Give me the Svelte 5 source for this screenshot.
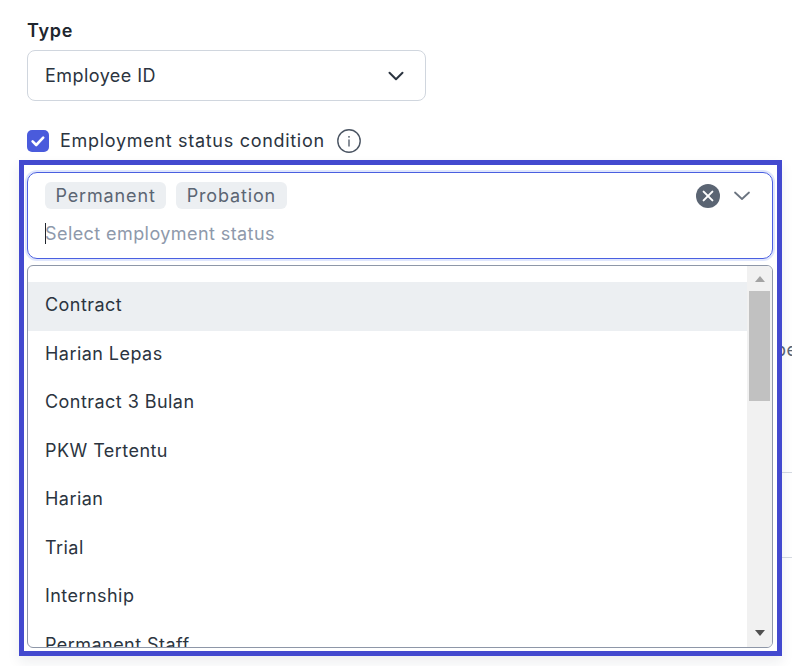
<script>
  const options = [
    "Contract",
    "Harian Lepas",
    "Contract 3 Bulan",
    "PKW Tertentu",
    "Harian",
    "Trial",
    "Internship",
    "Permanent Staff"
  ];
  const selected = ["Permanent", "Probation"];
</script>

<div class="page">
  <!-- content of the form behind the dropdown -->
  <span class="behind-text">pe</span>
  <i class="behind-line one"></i>
  <i class="behind-line two"></i>

  <div class="field">
    <label for="type">Type</label>
    <div class="select" id="type">
      <span>Employee ID</span>
      <svg width="18" height="18" viewBox="0 0 18 18" fill="none">
        <path d="M2.5 5.8 9 12.2l6.5-6.4" stroke="#2b3440" stroke-width="2" stroke-linecap="round" stroke-linejoin="round" />
      </svg>
    </div>
  </div>

  <div class="check-row">
    <span class="checkbox">
      <svg width="16" height="16" viewBox="0 0 16 16" fill="none">
        <path d="M2.6 8.4 6.2 12l7-7.4" stroke="#fff" stroke-width="2.6" stroke-linecap="round" stroke-linejoin="round" />
      </svg>
    </span>
    <span class="check-label">Employment status condition</span>
    <svg class="info" width="26" height="26" viewBox="0 0 26 26" fill="none">
      <circle cx="13" cy="13" r="11.2" stroke="#4b5563" stroke-width="1.4" />
      <path d="M13 12v6" stroke="#4b5563" stroke-width="1.3" stroke-linecap="round" />
      <circle cx="13" cy="8.8" r="0.9" fill="#4b5563" />
    </svg>
  </div>

  <div class="highlight">
    <div class="multi">
      <div class="multi-main">
        <div class="tags">
          {#each selected as tag}
            <span class="tag">{tag}</span>
          {/each}
        </div>
        <div class="placeholder"><i class="caret"></i>Select employment status</div>
      </div>
      <div class="multi-icons">
        <svg width="24" height="24" viewBox="0 0 24 24" fill="none">
          <circle cx="12" cy="12" r="12" fill="#5b6573" />
          <path d="M7.6 7.6l8.8 8.8M16.4 7.6l-8.8 8.8" stroke="#fff" stroke-width="2" stroke-linecap="round" />
        </svg>
        <svg width="18" height="18" viewBox="0 0 18 18" fill="none">
          <path d="M2 5.5 9 12l7-6.5" stroke="#6b7480" stroke-width="1.8" stroke-linecap="round" stroke-linejoin="round" />
        </svg>
      </div>
    </div>

    <div class="dropdown">
      <ul>
        {#each options as option, i}
          <li class:active={i === 0}>{option}</li>
        {/each}
      </ul>
      <div class="scrollbar">
        <span class="arrow up"></span>
        <div class="track"><div class="thumb"></div></div>
        <span class="arrow down"></span>
      </div>
    </div>
  </div>
</div>

<style>
  :global(body) {
    background: #fff;
  }

  .page {
    position: relative;
    width: 792px;
    height: 666px;
    overflow: hidden;
    padding: 20px 0 0 27px;
    box-sizing: border-box;
    font-family: Inter, "Liberation Sans", sans-serif;
    color: #2b3440;
  }

  .behind-text {
    position: absolute;
    left: 775px;
    top: 339px;
    font-size: 18px;
    letter-spacing: 0.5px;
    color: #5b6573;
  }

  .behind-line {
    position: absolute;
    left: 772px;
    right: 0;
    height: 1px;
    background: #d5dae2;
  }

  .one {
    top: 472px;
  }

  .two {
    top: 557px;
  }

  label {
    display: block;
    font-size: 18px;
    font-weight: 600;
    line-height: 22px;
    letter-spacing: 0.7px;
    color: #20262e;
  }

  .select {
    width: 399px;
    height: 51px;
    margin-top: 8px;
    box-sizing: border-box;
    border: 1px solid #d0d6de;
    border-radius: 8px;
    padding: 0 20px 0 17px;
    display: flex;
    align-items: center;
    justify-content: space-between;
    font-size: 18px;
    letter-spacing: 0.45px;
  }

  .check-row {
    display: flex;
    align-items: center;
    margin-top: 27px;
    height: 26px;
  }

  .checkbox {
    width: 22px;
    height: 22px;
    border-radius: 5px;
    background: #4a5bdc;
    display: flex;
    align-items: center;
    justify-content: center;
  }

  .check-label {
    margin: -2px 0 0 11px;
    font-size: 18px;
    letter-spacing: 0.7px;
  }

  .info {
    margin-left: 11px;
  }

  .highlight {
    position: relative;
    width: 763px;
    height: 496px;
    margin: 6px 0 0 -8px;
    box-sizing: border-box;
    border: 5px solid #4349cf;
    outline: 1px solid rgba(67, 73, 207, 0.5);
    outline-offset: -1px;
    padding: 7px 4px 0 3px;
    background: #fff;
    box-shadow: 0 6px 12px rgba(30, 40, 60, 0.08);
  }

  .multi {
    height: 87px;
    box-sizing: border-box;
    border: 1px solid #4a5fe0;
    border-radius: 10px;
    box-shadow: 0 0 0 2px #dfe6fd;
    padding: 9px 21px 0 17px;
    display: flex;
    justify-content: space-between;
  }

  .tags {
    display: flex;
    gap: 10px;
  }

  .tag {
    height: 27px;
    line-height: 27px;
    padding: 0 10.5px;
    border-radius: 6px;
    background: #eceff2;
    color: #5b6573;
    font-size: 18px;
    letter-spacing: 0.85px;
  }

  .placeholder {
    position: relative;
    margin-top: 11px;
    line-height: 27px;
    font-size: 18px;
    letter-spacing: 0.42px;
    color: #8e99ab;
  }

  .caret {
    position: absolute;
    left: 0;
    top: 3px;
    width: 1px;
    height: 21px;
    background: #20262e;
  }

  .multi-icons {
    display: flex;
    align-items: center;
    gap: 13px;
    height: 27px;
  }

  .dropdown {
    height: 383px;
    margin-top: 6px;
    box-sizing: border-box;
    border: 1px solid #8e97a8;
    border-radius: 6px;
    display: flex;
    overflow: hidden;
    background: #fff;
  }

  ul {
    list-style: none;
    margin: 0;
    padding: 16px 0 0;
    flex: 1;
    overflow: hidden;
    font-size: 18px;
    letter-spacing: 0.45px;
  }

  li {
    height: 48.5px;
    line-height: 46.5px;
    padding-left: 17px;
    white-space: nowrap;
  }

  .active {
    background: #eceff2;
  }

  .scrollbar {
    width: 25px;
    background: #f1f1f1;
    display: flex;
    flex-direction: column;
    align-items: center;
  }

  .arrow {
    width: 0;
    height: 0;
    flex: none;
    border-left: 5.5px solid transparent;
    border-right: 5.5px solid transparent;
  }

  .up {
    margin-top: 10px;
    border-bottom: 6px solid #a3a3a3;
  }

  .down {
    margin-bottom: 11px;
    border-top: 6px solid #505050;
  }

  .track {
    flex: 1;
    width: 100%;
    padding-top: 9px;
    box-sizing: border-box;
  }

  .thumb {
    width: 21px;
    height: 110px;
    margin: 0 auto;
    background: #c1c1c1;
  }
</style>
